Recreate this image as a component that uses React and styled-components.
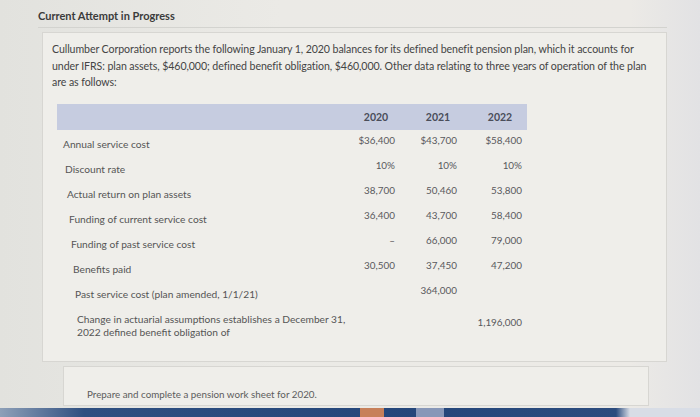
import React from "react";
import styled, { createGlobalStyle } from "styled-components";

const Global = createGlobalStyle`
  html, body { margin: 0; padding: 0; }
  body { background: #e4e3df; font-family: Lato, "Open Sans", sans-serif; }
`;

const Page = styled.div`
  width: 700px;
  height: 417px;
  overflow: hidden;
  display: flex;
  flex-direction: column;
  background: linear-gradient(90deg, #e2e2de 0%, #ebeae6 40%, #eceae6 90%, #e2e2e4 100%);
`;

const Main = styled.div`
  flex: 1;
  padding: 9px 0 0 38px;
  display: flex;
  flex-direction: column;
`;

const Title = styled.div`
  font-size: 11px;
  font-weight: 700;
  color: #3b3b3b;
  line-height: 14px;
`;

const Divider = styled.div`
  margin-top: 4px;
  width: 629px;
  border-top: 1px solid #d3d3cf;
`;

const Card = styled.div`
  margin-top: 4px;
  margin-left: ${(p) => p.$indent}px;
  width: ${(p) => p.$width}px;
  height: ${(p) => p.$height}px;
  box-sizing: border-box;
  background: #efeeea;
  border: 1px solid #d7d6d2;
  padding: ${(p) => p.$pad};
`;

const Para = styled.p`
  margin: 0;
  font-size: 10.6px;
  line-height: 16.5px;
  color: #444;
  letter-spacing: -0.08px;
  white-space: nowrap;
`;

const Table = styled.div`
  margin: 13px 0 0 5px;
  width: 470px;
  display: grid;
  grid-template-columns: 288px 62px 62px 58px;
`;

const HeadCell = styled.div`
  background: #c6cce0;
  height: 26px;
  display: flex;
  align-items: center;
  justify-content: center;
  font-size: 10.5px;
  font-weight: 700;
  color: #4a4d5a;
  padding-left: ${(p) => p.$shift || 0}px;
`;

const Label = styled.div`
  min-height: 25px;
  box-sizing: border-box;
  padding-top: 8px;
  font-size: 10.2px;
  line-height: 13.5px;
  color: #555;
  white-space: nowrap;
`;

const Num = styled.div`
  min-height: 25px;
  box-sizing: border-box;
  padding-top: ${(p) => p.$top}px;
  padding-right: ${(p) => p.$right}px;
  text-align: right;
  font-size: 9.9px;
  line-height: 13px;
  color: #58585c;
`;

const Prompt = styled.div`
  font-size: 9.8px;
  color: #5c5c5c;
  line-height: 12px;
`;

const Taskbar = styled.div`
  height: 9px;
  display: flex;
  align-items: stretch;
  background: linear-gradient(90deg, #8ea0b8 0%, #2f4f80 12%, #24467a 60%, #2c4c7e 88%, #d8dde6 90%);
`;

const Chip = styled.div`
  margin-left: ${(p) => p.$left}px;
  width: ${(p) => p.$w}px;
  background: ${(p) => p.$c};
`;

const rows = [
  { label: "Annual service cost", v: ["$36,400", "$43,700", "$58,400"] },
  { label: "Discount rate", v: ["10%", "10%", "10%"] },
  { label: "Actual return on plan assets", v: ["38,700", "50,460", "53,800"] },
  { label: "Funding of current service cost", v: ["36,400", "43,700", "58,400"] },
  { label: "Funding of past service cost", v: ["\u2013", "66,000", "79,000"] },
  { label: "Benefits paid", v: ["30,500", "37,450", "47,200"] },
  { label: "Past service cost (plan amended, 1/1/21)", v: ["", "364,000", ""] },
];

export default function App() {
  return (
    <>
      <Global />
      <Page>
        <Main>
          <Title>Current Attempt in Progress</Title>
          <Divider />
          <Card $indent={4} $width={625} $height={330} $pad="8px 0 0 9px">
            <Para>
              Cullumber Corporation reports the following January 1, 2020 balances for its defined benefit pension plan, which it accounts for
              <br />
              under IFRS: plan assets, $460,000; defined benefit obligation, $460,000. Other data relating to three years of operation of the plan
              <br />
              are as follows:
            </Para>
            <Table>
              <HeadCell />
              <HeadCell>2020</HeadCell>
              <HeadCell>2021</HeadCell>
              <HeadCell $shift={4}>2022</HeadCell>
              {rows.map((r, i) => (
                <React.Fragment key={r.label}>
                  <Label style={{ paddingLeft: 6 + i * 2 }}>{r.label}</Label>
                  <Num $top={4} $right={12}>{r.v[0]}</Num>
                  <Num $top={4} $right={12}>{r.v[1]}</Num>
                  <Num $top={4} $right={5}>{r.v[2]}</Num>
                </React.Fragment>
              ))}
              <Label style={{ paddingLeft: 20 }}>
                Change in actuarial assumptions establishes a December 31,
                <br />
                2022 defined benefit obligation of
              </Label>
              <Num $top={11} $right={12}></Num>
              <Num $top={11} $right={12}></Num>
              <Num $top={11} $right={5}>1,196,000</Num>
            </Table>
          </Card>
          <Card $indent={25} $width={586} $height={40} $pad="21px 0 0 23px">
            <Prompt>Prepare and complete a pension work sheet for 2020.</Prompt>
          </Card>
        </Main>
        <Taskbar>
          <Chip $left={360} $w={24} $c="#c7805a" />
          <Chip $left={32} $w={28} $c="#8797b8" />
        </Taskbar>
      </Page>
    </>
  );
}
